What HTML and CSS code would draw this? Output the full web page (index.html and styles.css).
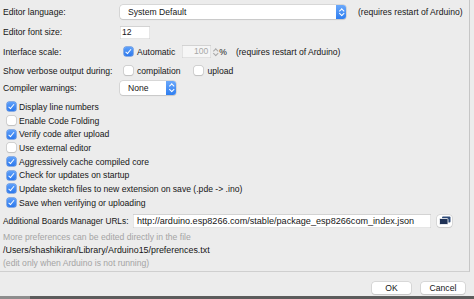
FILE: index.html
```html
<!DOCTYPE html>
<html lang="en">
<head>
    <meta charset="UTF-8">
    <title>Preferences</title>
    <link rel="stylesheet" href="styles.css">
</head>
<body>
    <div class="window">
        <div class="panel">
            <!-- editor settings -->
            <div class="row row-lang">
                <span class="label">Editor language:</span>
                <div class="select select-lang">
                    <span class="select-text">System Default</span>
                    <span class="stepper"></span>
                </div>
                <span class="note">(requires restart of Arduino)</span>
            </div>
            <div class="row row-font">
                <span class="label">Editor font size:</span>
                <span class="field field-font">12</span>
            </div>
            <div class="row row-scale">
                <span class="label">Interface scale:</span>
                <span class="check on"></span>
                <span class="opt">Automatic</span>
                <span class="field field-scale">100</span>
                <span class="spin"></span>
                <span class="pct">%</span>
                <span class="note">(requires restart of Arduino)</span>
            </div>
            <div class="row row-verbose">
                <span class="label">Show verbose output during:</span>
                <span class="check"></span>
                <span class="opt">compilation</span>
                <span class="check check-upload"></span>
                <span class="opt">upload</span>
            </div>
            <div class="row row-warn">
                <span class="label">Compiler warnings:</span>
                <div class="select select-warn">
                    <span class="select-text">None</span>
                    <span class="stepper"></span>
                </div>
            </div>

            <!-- checkbox list -->
            <ul class="checks">
                <li><span class="check on"></span>Display line numbers</li>
                <li><span class="check"></span>Enable Code Folding</li>
                <li><span class="check on"></span>Verify code after upload</li>
                <li><span class="check"></span>Use external editor</li>
                <li><span class="check on"></span>Aggressively cache compiled core</li>
                <li><span class="check on"></span>Check for updates on startup</li>
                <li><span class="check on"></span>Update sketch files to new extension on save (.pde -&gt; .ino)</li>
                <li><span class="check on"></span>Save when verifying or uploading</li>
            </ul>

            <div class="row row-urls">
                <span class="label label-urls">Additional Boards Manager URLs:</span>
                <span class="field field-urls">http://arduino.esp8266.com/stable/package_esp8266com_index.json</span>
                <span class="expand">
                    <svg width="12" height="9" viewBox="0 0 12 9">
                        <rect x="3" y="0.5" width="8.5" height="6" rx="1" fill="#2e4a78"/>
                        <rect x="0.5" y="2.5" width="8.5" height="6" rx="1" fill="#1f3256" stroke="#fff" stroke-width="0.8"/>
                    </svg>
                </span>
            </div>

            <p class="info info-first muted">More preferences can be edited directly in the file</p>
            <p class="info info-path">/Users/shashikiran/Library/Arduino15/preferences.txt</p>
            <p class="info muted">(edit only when Arduino is not running)</p>
        </div>

        <div class="buttons">
            <span class="btn btn-ok">OK</span>
            <span class="btn btn-cancel">Cancel</span>
        </div>
    </div>
    <div class="dock"></div>
</body>
</html>
```

FILE: styles.css
```css
body {
    margin: 0;
    background-color: #ececec;
    font-family: 'Liberation Sans', Arial, sans-serif;
    font-size: 8.6px;
    color: #161616;
    width: 474px;
    height: 299px;
    overflow: hidden;
}

.window {
    height: 296px;
    display: flex;
    flex-direction: column;
}

.panel {
    width: 470px;
    height: 272px;
    box-sizing: border-box;
    border-right: 1px solid #c6c6c6;
    border-bottom: 1px solid #cfcfcf;
    padding: 2px 0 0 3px;
}

.row {
    display: flex;
    align-items: center;
    height: 20px;
}

.row-scale,
.row-verbose {
    height: 19px;
}

.row-warn {
    height: 15px;
}

.label {
    width: 117px;
    flex-shrink: 0;
}

.select {
    display: flex;
    align-items: center;
    height: 14px;
    box-sizing: border-box;
    background: #fff;
    border-radius: 3px;
    box-shadow: 0 0 0 0.5px #c2c2c2, 0 1px 1px rgba(0, 0, 0, 0.12);
}

.select-text {
    flex: 1;
    padding-left: 8px;
}

.select-lang {
    width: 226px;
}

.select-warn {
    width: 56px;
}

.stepper {
    width: 10px;
    height: 14px;
    border-radius: 0 3px 3px 0;
    background: linear-gradient(#6aa8fb, #2f7ef0);
    position: relative;
}

/* up/down chevrons */
.stepper::before,
.stepper::after,
.spin::before,
.spin::after {
    content: '';
    position: absolute;
    left: 3.5px;
    width: 2.5px;
    height: 2.5px;
    border-left: 1px solid #fff;
    border-top: 1px solid #fff;
}

.stepper::before {
    top: 3.5px;
    transform: rotate(45deg);
}

.stepper::after {
    top: 7px;
    transform: rotate(-135deg);
}

.note {
    margin-left: 12px;
}

.field {
    background: #fff;
    box-sizing: border-box;
    height: 13px;
    line-height: 13px;
    box-shadow: inset 0 0 0 0.5px #cdcdcd, inset 0 1px 0 #d8d8d8;
    padding-left: 2px;
}

.field-font {
    width: 30px;
}

.field-scale {
    width: 29px;
    margin-left: 7px;
    text-align: right;
    padding-right: 3px;
    color: #a8a8a8;
    background: #f6f6f6;
}

.spin {
    position: relative;
    width: 7px;
    height: 12px;
    margin-left: 1px;
}

.spin::before,
.spin::after {
    left: 2px;
    border-color: #a9a9a9;
}

.spin::before {
    top: 3px;
    transform: rotate(45deg);
}

.spin::after {
    top: 6.5px;
    transform: rotate(-135deg);
}

.row-scale .note {
    margin-left: 9px;
}

.check {
    display: inline-block;
    width: 9px;
    height: 9px;
    box-sizing: border-box;
    background: #fff;
    border-radius: 2px;
    box-shadow: 0 0 0 0.5px #b9b9b9, 0 0.5px 1px rgba(0, 0, 0, 0.15);
    position: relative;
    flex-shrink: 0;
}

.check.on {
    background: linear-gradient(#5ea0fa, #2c78ec);
    box-shadow: 0 0 0 0.5px #2a6fd8;
}

.check.on::after {
    content: '';
    position: absolute;
    left: 2.8px;
    top: 0.8px;
    width: 2px;
    height: 4.5px;
    border-right: 1.4px solid #fff;
    border-bottom: 1.4px solid #fff;
    transform: rotate(40deg);
}

.row .check {
    margin-left: 4px;
}

.opt {
    margin-left: 4px;
}

.row .check-upload {
    margin-left: 14px;
}

.checks {
    list-style: none;
    margin: 5px 0 0 0;
    padding: 0 0 0 4px;
}

.checks li {
    display: flex;
    align-items: center;
    height: 13.7px;
}

.checks .check {
    margin-right: 3px;
}

.row-urls {
    margin-top: 3px;
    height: 16px;
}

.label-urls {
    width: 130px;
    font-size: 8.3px;
}

.field-urls {
    width: 298px;
    height: 14px;
    line-height: 14px;
    padding-left: 4px;
    font-size: 9.1px;
    white-space: nowrap;
    overflow: hidden;
}

.expand {
    margin-left: 6px;
    width: 15px;
    height: 12px;
    background: #fff;
    border-radius: 3px;
    box-shadow: 0 0 0 0.5px #c4c4c4, 0 1px 1px rgba(0, 0, 0, 0.1);
    display: flex;
    align-items: center;
    justify-content: center;
}

.info {
    margin: 0;
    height: 13px;
    line-height: 13px;
    white-space: nowrap;
}

.info-first {
    margin-top: 2px;
}

.info-path {
    font-size: 8.9px;
}

.muted {
    color: #a4a4a4;
}

.buttons {
    display: flex;
    justify-content: flex-end;
    gap: 10px;
    padding: 10px 9px 0 0;
}

.btn {
    height: 12px;
    line-height: 12px;
    background: #fff;
    border-radius: 3px;
    box-shadow: 0 0 0 0.5px #c4c4c4, 0 1px 1px rgba(0, 0, 0, 0.15);
    text-align: center;
}

.btn-ok {
    width: 39px;
}

.btn-cancel {
    width: 44px;
}

.dock {
    height: 3px;
    background: linear-gradient(90deg, #8d8d8d 0, #8d8d8d 30px, #5c5c5c 30px);
}
```
